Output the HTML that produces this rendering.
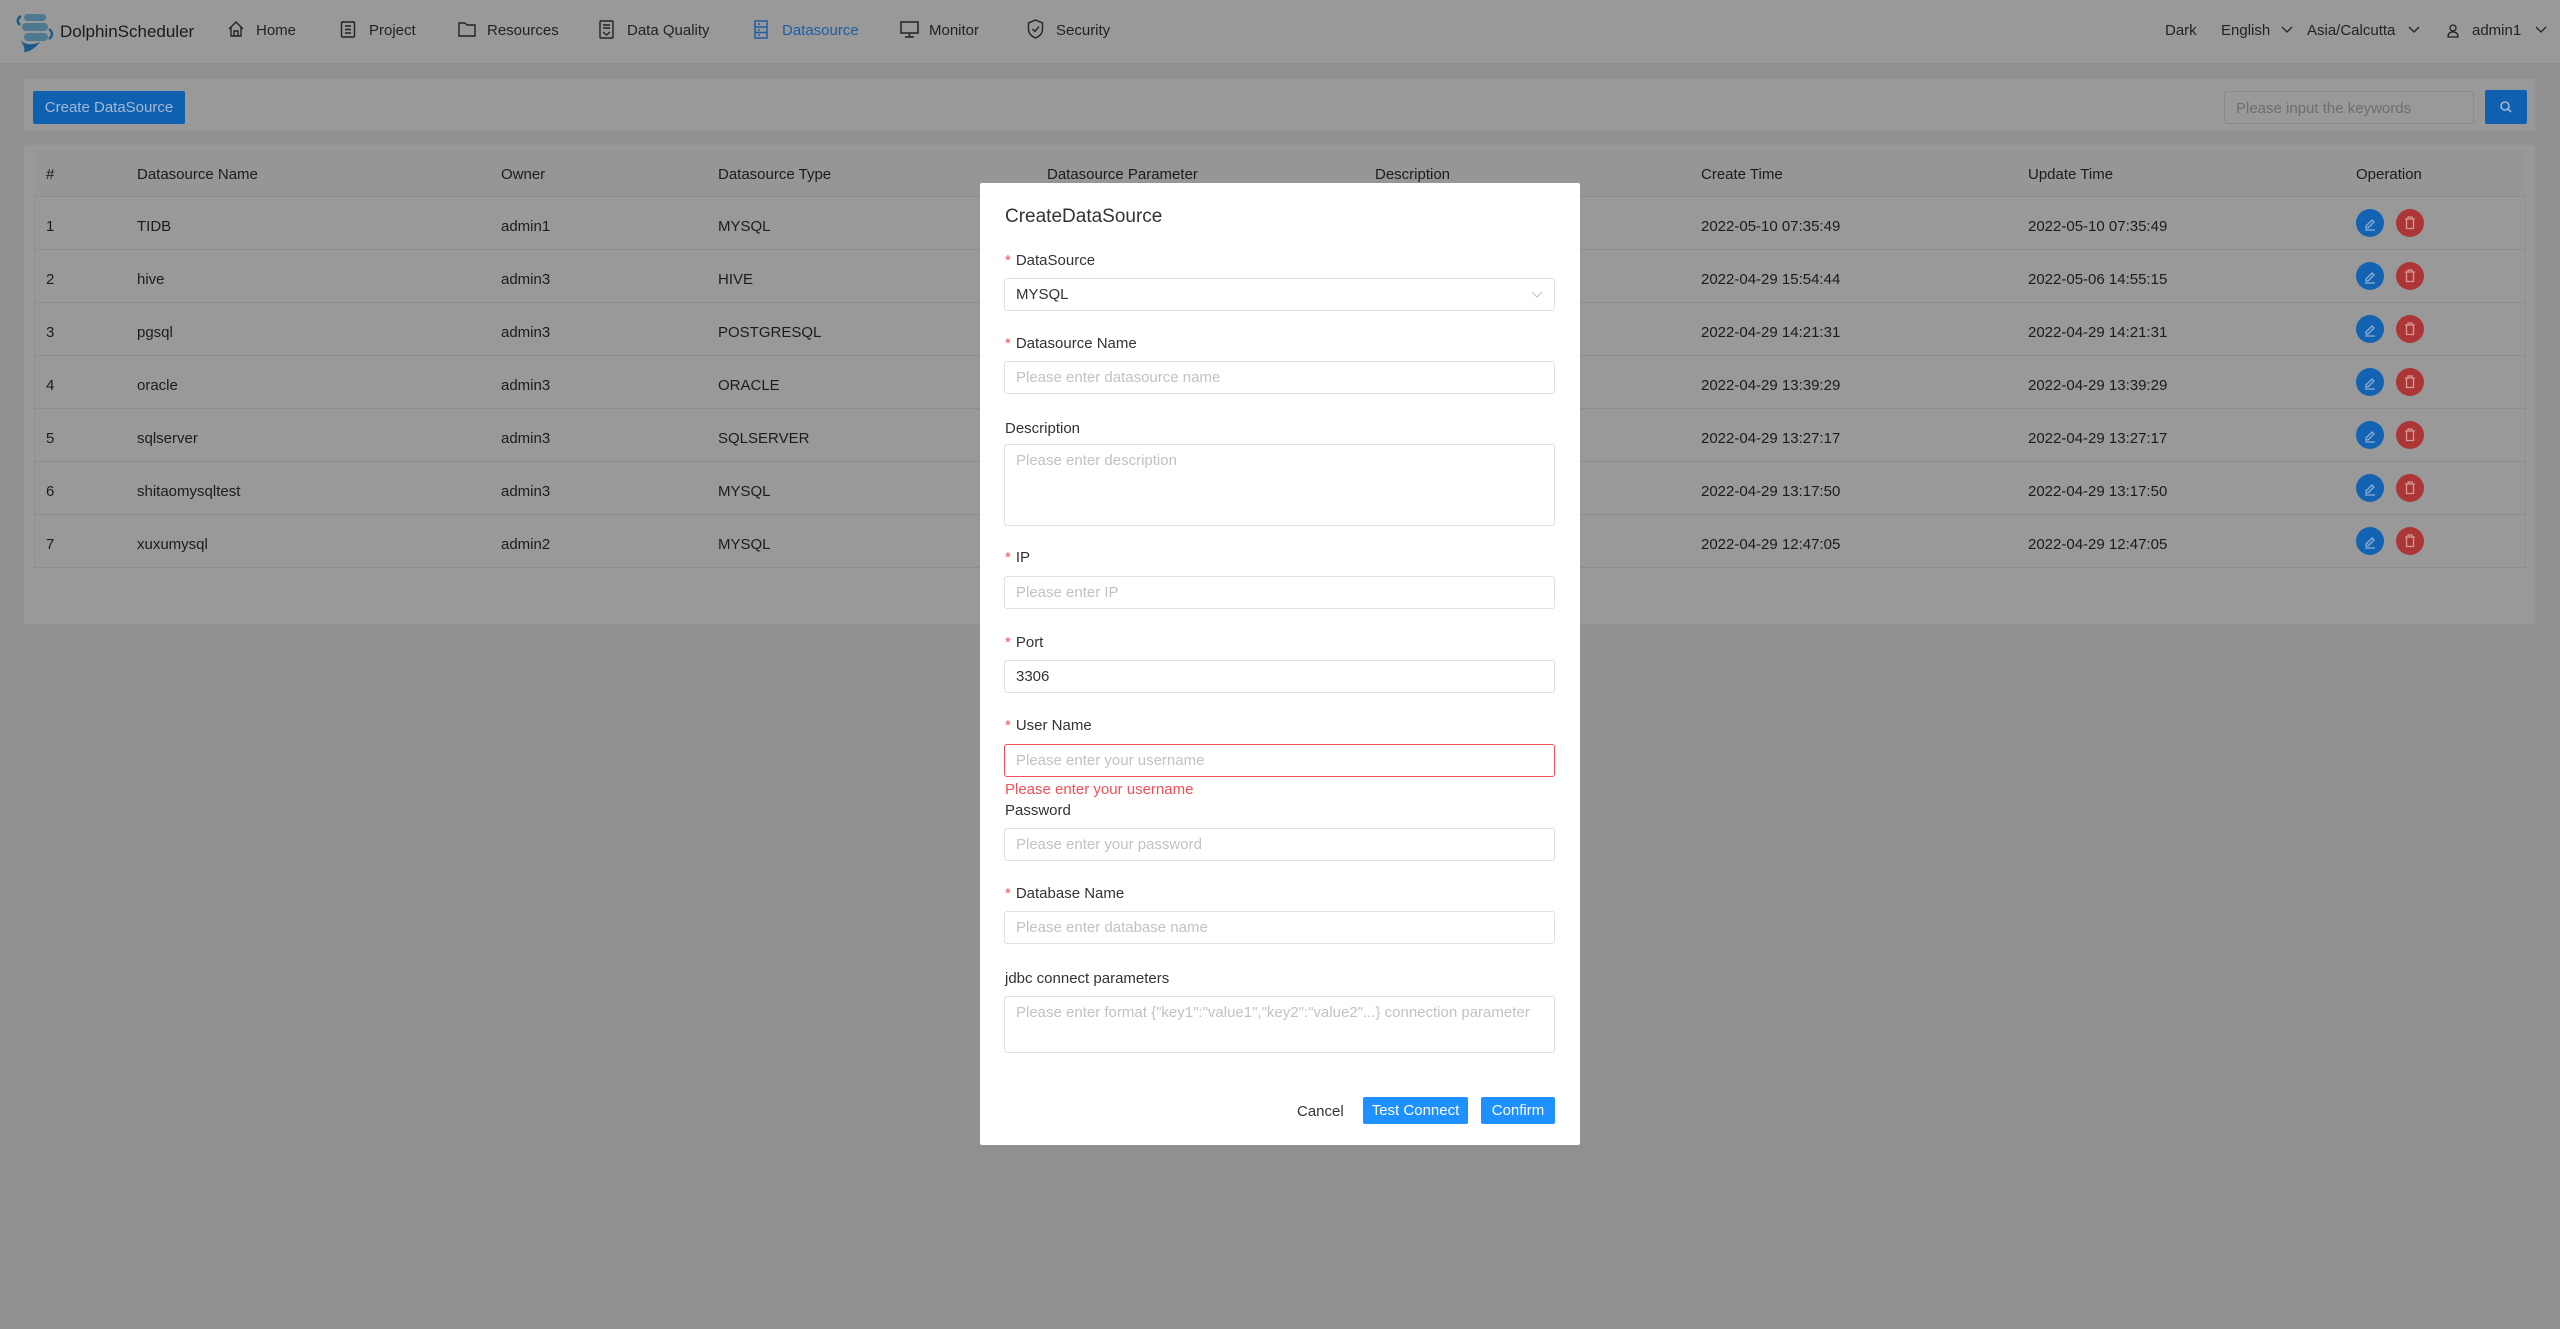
<!DOCTYPE html>
<html><head><meta charset="utf-8"><style>
*{box-sizing:border-box;margin:0;padding:0}
body{width:2560px;height:1329px;background:#909090;font-family:"Liberation Sans",sans-serif;font-size:15px;color:#1c1c1c;position:relative;overflow:hidden}
.a{position:absolute;white-space:nowrap}
.hdr{left:0;top:0;width:2560px;height:64px;background:#999;border-bottom:1px solid #8c8c8c}
.card{background:#999;border:1px solid #939393;border-radius:3px}
.nav{top:22px;font-size:15px;color:#222}
.ic{top:20px}
.th{top:166px}
.row{left:34px;width:2492px;height:53px;border-top:1px solid #8d8d8d}
.cell{font-size:15px;margin-top:3px}
.modal{left:980px;top:183px;width:600px;height:962px;background:#fff;border-radius:2px}
.m{color:#333}
.lbl{position:absolute;left:25px;font-size:15px;color:#333;margin-top:1px}
.lbl b{color:#f0505a;font-weight:normal;margin-right:5px}
.inp{position:absolute;left:24px;width:551px;height:33px;border:1px solid #e0e0e6;border-radius:3px;color:#c2c2c2;font-size:15px;padding:7px 11px}
.btn{position:absolute;height:27px;background:#1e90ff;color:#fff;border-radius:2px;font-size:15px;text-align:center;line-height:27px}
</style></head><body>
<div class="a hdr"></div>
<svg class="a" style="left:12px;top:12px" width="44" height="42" viewBox="0 0 44 42">
<rect x="12" y="2" width="22" height="7" rx="3.5" fill="#4e7790"/><rect x="10" y="11" width="26" height="8" rx="4" fill="#4e7790"/><rect x="12" y="21" width="24" height="8" rx="4" fill="#4e7790"/>
<path d="M9 4 Q3 8 8 13" stroke="#1a5a8a" stroke-width="2.4" fill="none"/><path d="M37 17 Q43 22 37 27" stroke="#1a5a8a" stroke-width="2.4" fill="none"/>
<path d="M6 26 Q14 36 28 30 Q20 40 12 40 Q14 34 6 26Z" fill="#1a5a8a"/></svg>
<div class="a" style="left:60px;top:22px;font-size:17px;color:#1a1a1a">DolphinScheduler</div>
<svg class="a ic" style="left:227px;top:20px" width="18" height="18" viewBox="0 0 18 18" fill="none" stroke="#222" stroke-width="1.4"><path d="M2 9 L9 2 L16 9 M4 7 V16 H14 V7 M7 16 V11 H11 V16"/></svg>
<div class="a nav" style="left:256px">Home</div>
<svg class="a ic" style="left:340px;top:21px" width="16" height="17" viewBox="0 0 16 17" fill="none" stroke="#222" stroke-width="1.4"><rect x="1.5" y="1" width="13" height="15" rx="1"/><path d="M5 5h6M5 8.5h6M5 12h6"/></svg>
<div class="a nav" style="left:369px">Project</div>
<svg class="a ic" style="left:458px;top:22px" width="18" height="15" viewBox="0 0 18 15" fill="none" stroke="#222" stroke-width="1.4"><path d="M1 1 H7 L9 3 H17 V14 H1Z"/></svg>
<div class="a nav" style="left:487px">Resources</div>
<svg class="a ic" style="left:599px;top:20px" width="15" height="19" viewBox="0 0 15 19" fill="none" stroke="#222" stroke-width="1.4"><rect x="1" y="1" width="13" height="17" rx="1"/><path d="M4 5h7M4 8h7M4 12 L7.5 15 L11 12"/></svg>
<div class="a nav" style="left:627px">Data Quality</div>
<svg class="a ic" style="left:754px;top:20px" width="14" height="19" viewBox="0 0 14 19" fill="none" stroke="#1e5ea6" stroke-width="1.5"><rect x="1" y="1" width="12" height="17"/><path d="M1 7h12M1 12.5h12M4 4h2M4 10h2M4 15h2"/></svg>
<div class="a nav" style="left:782px;color:#1e5ea6">Datasource</div>
<svg class="a ic" style="left:900px;top:21px" width="19" height="17" viewBox="0 0 19 17" fill="none" stroke="#222" stroke-width="1.5"><rect x="1" y="1" width="17" height="11"/><path d="M9.5 12v4M5 16h9"/></svg>
<div class="a nav" style="left:929px">Monitor</div>
<svg class="a ic" style="left:1027px;top:19px" width="17" height="20" viewBox="0 0 17 20" fill="none" stroke="#222" stroke-width="1.4"><path d="M8.5 1 L15.5 4 V10 Q15.5 16 8.5 19 Q1.5 16 1.5 10 V4Z"/><path d="M5.5 10 L8 12.5 L12 7.5"/></svg>
<div class="a nav" style="left:1056px">Security</div>
<div class="a nav" style="left:2165px">Dark</div>
<div class="a nav" style="left:2221px">English</div>
<svg class="a" style="left:2281px;top:26px" width="12" height="8"><path d="M1 1 L6 6 L11 1" stroke="#222" fill="none" stroke-width="1.3"/></svg>
<div class="a nav" style="left:2307px">Asia/Calcutta</div>
<svg class="a" style="left:2408px;top:26px" width="12" height="8"><path d="M1 1 L6 6 L11 1" stroke="#222" fill="none" stroke-width="1.3"/></svg>
<svg class="a" style="left:2447px;top:24px" width="12" height="14" viewBox="0 0 12 14" fill="none" stroke="#222" stroke-width="1.3"><circle cx="6" cy="4" r="3"/><path d="M1 13 Q1 8 6 8 Q11 8 11 13Z"/></svg>
<div class="a nav" style="left:2472px">admin1</div>
<svg class="a" style="left:2535px;top:26px" width="12" height="8"><path d="M1 1 L6 6 L11 1" stroke="#222" fill="none" stroke-width="1.3"/></svg>

<div class="a card" style="left:23px;top:78px;width:2513px;height:54px"></div>
<div class="a" style="left:33px;top:91px;width:152px;height:33px;background:#1060b0;border-radius:2px;color:#9fb9d6;font-size:15px;text-align:center;line-height:33px">Create DataSource</div>
<div class="a" style="left:2224px;top:91px;width:250px;height:33px;border:1px solid #8a8a8a;border-radius:3px;color:#6e6e6e;padding:8px 11px;font-size:15px">Please input the keywords</div>
<div class="a" style="left:2485px;top:90px;width:42px;height:34px;background:#1060b0;border-radius:2px"></div>
<svg class="a" style="left:2499px;top:100px" width="14" height="14" viewBox="0 0 14 14" fill="none" stroke="#9fb9d6" stroke-width="1.6"><circle cx="6" cy="6" r="4"/><path d="M9 9l3 3"/></svg>

<div class="a card" style="left:23px;top:144px;width:2513px;height:481px"></div>
<div class="a" style="left:34px;top:150px;width:2492px;height:418px;background:#999;border:1px solid #939393;border-bottom:none"></div>
<div class="a" style="left:34px;top:150px;width:2492px;height:46px;background:#969696"></div>
<div class="a th" style="left:46px">#</div>
<div class="a th" style="left:137px">Datasource Name</div>
<div class="a th" style="left:501px">Owner</div>
<div class="a th" style="left:718px">Datasource Type</div>
<div class="a th" style="left:1047px">Datasource Parameter</div>
<div class="a th" style="left:1375px">Description</div>
<div class="a th" style="left:1701px">Create Time</div>
<div class="a th" style="left:2028px">Update Time</div>
<div class="a th" style="left:2356px">Operation</div>

<div class="a row" style="top:196px"></div><div class="a row" style="top:249px"></div><div class="a row" style="top:302px"></div><div class="a row" style="top:355px"></div><div class="a row" style="top:408px"></div><div class="a row" style="top:461px"></div><div class="a row" style="top:514px"></div><div class="a row" style="top:567px;height:1px"></div>

<div class="a cell" style="left:46px;top:215px">1</div><div class="a cell" style="left:137px;top:215px">TIDB</div><div class="a cell" style="left:501px;top:215px">admin1</div><div class="a cell" style="left:718px;top:215px">MYSQL</div><div class="a cell" style="left:1701px;top:215px">2022-05-10 07:35:49</div><div class="a cell" style="left:2028px;top:215px">2022-05-10 07:35:49</div>
<div class="a cell" style="left:46px;top:268px">2</div><div class="a cell" style="left:137px;top:268px">hive</div><div class="a cell" style="left:501px;top:268px">admin3</div><div class="a cell" style="left:718px;top:268px">HIVE</div><div class="a cell" style="left:1701px;top:268px">2022-04-29 15:54:44</div><div class="a cell" style="left:2028px;top:268px">2022-05-06 14:55:15</div>
<div class="a cell" style="left:46px;top:321px">3</div><div class="a cell" style="left:137px;top:321px">pgsql</div><div class="a cell" style="left:501px;top:321px">admin3</div><div class="a cell" style="left:718px;top:321px">POSTGRESQL</div><div class="a cell" style="left:1701px;top:321px">2022-04-29 14:21:31</div><div class="a cell" style="left:2028px;top:321px">2022-04-29 14:21:31</div>
<div class="a cell" style="left:46px;top:374px">4</div><div class="a cell" style="left:137px;top:374px">oracle</div><div class="a cell" style="left:501px;top:374px">admin3</div><div class="a cell" style="left:718px;top:374px">ORACLE</div><div class="a cell" style="left:1701px;top:374px">2022-04-29 13:39:29</div><div class="a cell" style="left:2028px;top:374px">2022-04-29 13:39:29</div>
<div class="a cell" style="left:46px;top:427px">5</div><div class="a cell" style="left:137px;top:427px">sqlserver</div><div class="a cell" style="left:501px;top:427px">admin3</div><div class="a cell" style="left:718px;top:427px">SQLSERVER</div><div class="a cell" style="left:1701px;top:427px">2022-04-29 13:27:17</div><div class="a cell" style="left:2028px;top:427px">2022-04-29 13:27:17</div>
<div class="a cell" style="left:46px;top:480px">6</div><div class="a cell" style="left:137px;top:480px">shitaomysqltest</div><div class="a cell" style="left:501px;top:480px">admin3</div><div class="a cell" style="left:718px;top:480px">MYSQL</div><div class="a cell" style="left:1701px;top:480px">2022-04-29 13:17:50</div><div class="a cell" style="left:2028px;top:480px">2022-04-29 13:17:50</div>
<div class="a cell" style="left:46px;top:533px">7</div><div class="a cell" style="left:137px;top:533px">xuxumysql</div><div class="a cell" style="left:501px;top:533px">admin2</div><div class="a cell" style="left:718px;top:533px">MYSQL</div><div class="a cell" style="left:1701px;top:533px">2022-04-29 12:47:05</div><div class="a cell" style="left:2028px;top:533px">2022-04-29 12:47:05</div>

<svg class="a" style="left:2356px;top:209px" width="68" height="350">
<defs><g id="op"><circle cx="14" cy="14" r="14" fill="#1462b2"/><path d="M10 17 L16 11 L18 13 L12 19 H10Z M9 21h10" stroke="#8fb0d4" stroke-width="1.3" fill="none"/><circle cx="54" cy="14" r="14" fill="#ac3535"/><path d="M49 10h10M52 10V8h4v2M50.5 10.5v9h7v-9" stroke="#d59a9a" stroke-width="1.3" fill="none"/></g></defs>
<use href="#op" y="0"/><use href="#op" y="53"/><use href="#op" y="106"/><use href="#op" y="159"/><use href="#op" y="212"/><use href="#op" y="265"/><use href="#op" y="318"/>
</svg>

<div class="a modal">
<div class="a m" style="left:25px;top:23px;font-size:19px">CreateDataSource</div>
<div class="lbl" style="top:68px"><b>*</b>DataSource</div>
<div class="inp" style="top:95px;color:#333">MYSQL</div>
<svg class="a" style="left:551px;top:108px" width="12" height="8"><path d="M1 1 L6 6 L11 1" stroke="#c2c2c2" fill="none" stroke-width="1.2"/></svg>
<div class="lbl" style="top:151px"><b>*</b>Datasource Name</div>
<div class="inp" style="top:178px">Please enter datasource name</div>
<div class="lbl" style="top:236px">Description</div>
<div class="inp" style="top:261px;height:82px">Please enter description</div>
<div class="lbl" style="top:365px"><b>*</b>IP</div>
<div class="inp" style="top:393px">Please enter IP</div>
<div class="lbl" style="top:450px"><b>*</b>Port</div>
<div class="inp" style="top:477px;color:#333">3306</div>
<div class="lbl" style="top:533px"><b>*</b>User Name</div>
<div class="inp" style="top:561px;border-color:#f0505a">Please enter your username</div>
<div class="lbl" style="top:597px;color:#f0505a">Please enter your username</div>
<div class="lbl" style="top:618px">Password</div>
<div class="inp" style="top:645px">Please enter your password</div>
<div class="lbl" style="top:701px"><b>*</b>Database Name</div>
<div class="inp" style="top:728px">Please enter database name</div>
<div class="lbl" style="top:786px">jdbc connect parameters</div>
<div class="inp" style="top:813px;height:57px">Please enter format {"key1":"value1","key2":"value2"...} connection parameter</div>
<div class="a m" style="left:317px;top:920px;font-size:15px">Cancel</div>
<div class="btn" style="left:383px;top:914px;width:105px">Test Connect</div>
<div class="btn" style="left:501px;top:914px;width:74px">Confirm</div>
</div>
</body></html>
